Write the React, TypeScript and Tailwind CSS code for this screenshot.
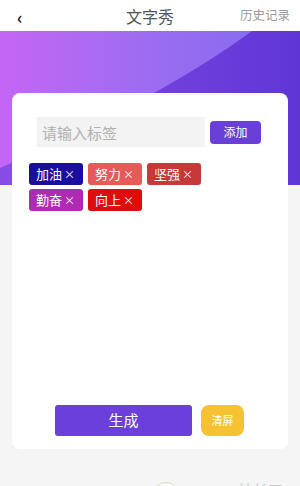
const tags = [
  { label: "加油", color: "bg-[#1b0e9c]" },
  { label: "努力", color: "bg-[#e65a5a]" },
  { label: "坚强", color: "bg-[#c73838]" },
  { label: "勤奋", color: "bg-[#b02bb4]" },
  { label: "向上", color: "bg-[#de0c0c]" },
];

export default function App() {
  return (
    <div className="h-[486px] w-[300px] overflow-hidden bg-[#f5f5f5] font-['Noto_Sans_CJK_SC',sans-serif]">
      <header className="relative flex h-[31px] items-center justify-center bg-white">
        <span className="absolute left-[17px] top-[4px] text-[17px] font-bold text-[#222]">‹</span>
        <h1 className="text-[16px] font-normal text-[#555]">文字秀</h1>
        <span className="absolute right-[10px] top-[6px] text-[12.5px] text-[#9a9a9a]">历史记录</span>
      </header>

      <div className="relative h-[154px] overflow-hidden bg-gradient-to-r from-[#c466f5] via-[#9c6cf0] to-[#7e6cf0]">
        <svg className="absolute inset-0 h-full w-full" viewBox="0 0 300 154" preserveAspectRatio="none">
          <defs>
            <linearGradient id="dark" x1="0" y1="0" x2="1" y2="0">
              <stop offset="0" stopColor="#8c4fe6" />
              <stop offset="1" stopColor="#5f36d6" />
            </linearGradient>
          </defs>
          <path d="M-40 154 Q 150 75 252 0 L300 0 L300 154 Z" fill="url(#dark)" />
        </svg>
      </div>

      <main className="relative mx-[12px] -mt-[92px] flex h-[356px] flex-col rounded-[8px] bg-white">
        <div className="mt-[24px] flex items-center pl-[25px] pr-[27px]">
          <input
            placeholder="请输入标签"
            className="h-[30px] w-[168px] bg-[#f3f3f3] px-[5px] text-[15px] text-[#333] outline-none placeholder:text-[#b0b0b0]"
          />
          <button className="ml-[5px] h-[23px] w-[51px] rounded-[4px] bg-[#6a3fd8] text-[12px] text-white">
            添加
          </button>
        </div>

        <div className="mt-[16px] flex w-[190px] flex-wrap gap-x-[5px] gap-y-[4px] pl-[17px]">
          {tags.map((t) => (
            <span
              key={t.label}
              className={`flex h-[22px] w-[54px] items-center justify-between rounded-[3px] pl-[7px] pr-[8px] text-[13px] text-white ${t.color}`}
            >
              {t.label}
              <span className="text-[11px]">×</span>
            </span>
          ))}
        </div>

        <div className="mt-auto mb-[13px] flex justify-center gap-[9px] pr-[1px]">
          <button className="h-[31px] w-[137px] rounded-[3px] bg-[#6a3fdc] text-[15px] text-white">
            生成
          </button>
          <button className="h-[31px] w-[43px] rounded-[8px] bg-[#f7c232] text-[11px] text-white">
            清屏
          </button>
        </div>
      </main>

      <div className="relative mt-[33px] h-[4px]">
        <span className="absolute left-[153px] top-0 h-[26px] w-[26px] rounded-full border border-[#d8d8c8] bg-white" />
        <span className="absolute left-[238px] top-[-2px] text-[15px] leading-[20px] text-[#ccc]">站长工</span>
      </div>
    </div>
  );
}
